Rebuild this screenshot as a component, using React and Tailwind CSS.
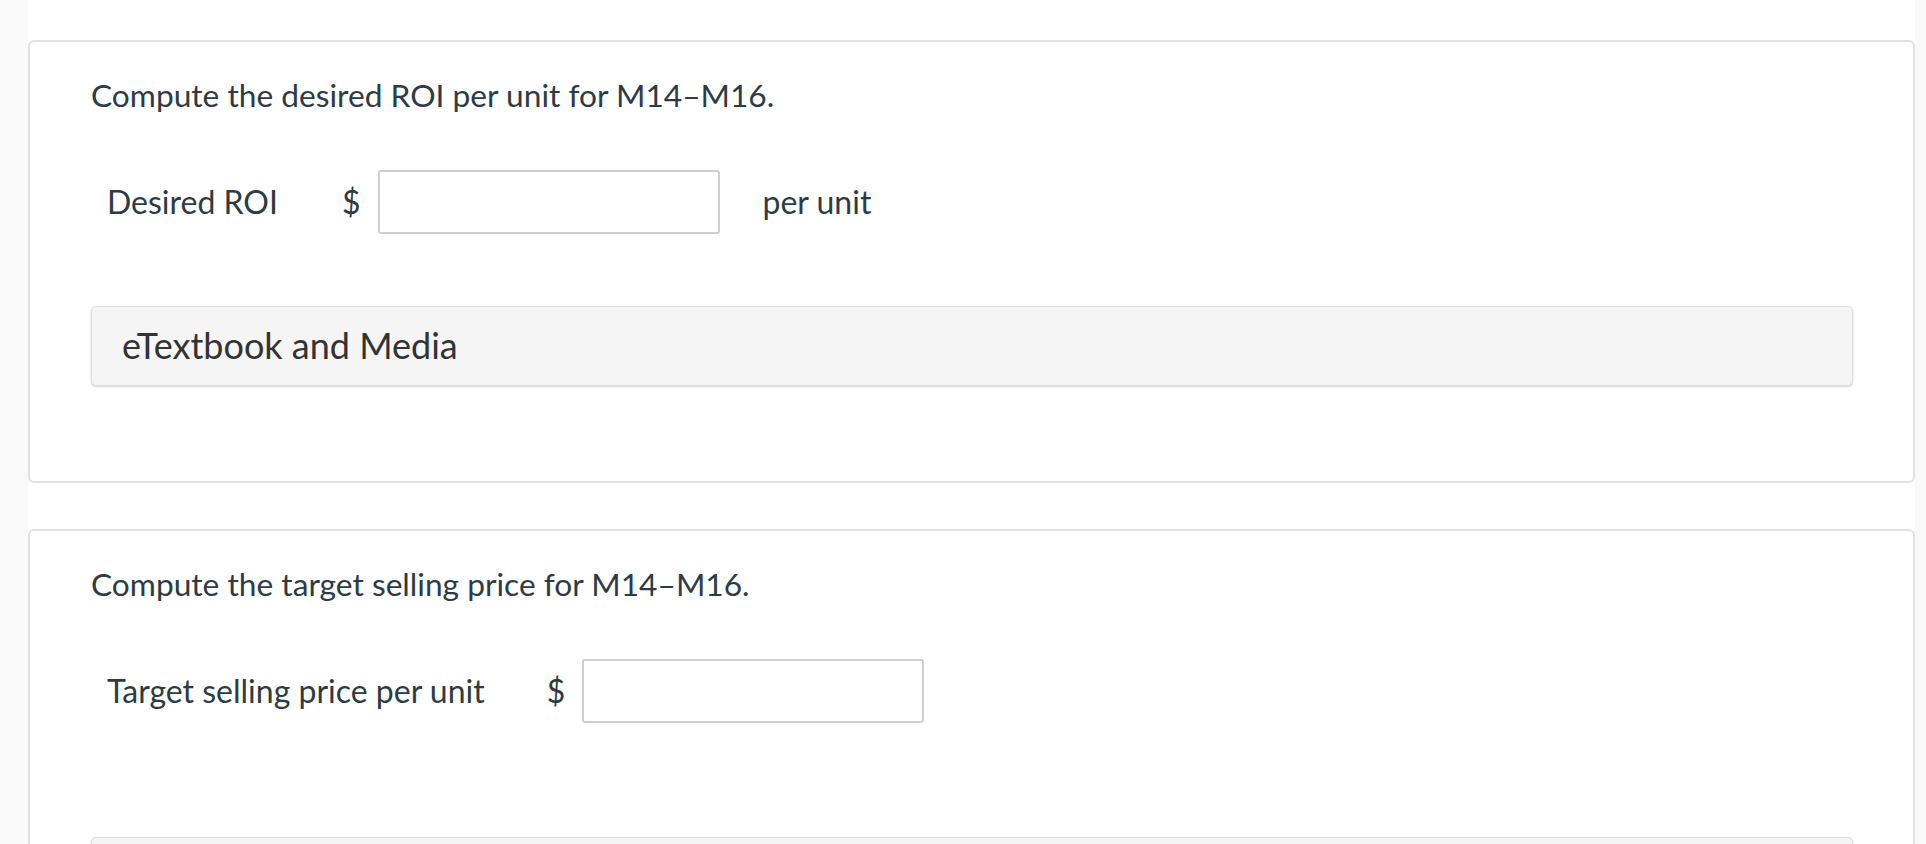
import React from 'react';

function AnswerRow({ label, gap, suffix }) {
    return (
        <div className="flex items-center pl-[16px]">
            <span className="text-[32px] leading-[1.2]">{label}</span>
            <span className={`text-[32px] leading-[1.2] ${gap}`}>$</span>
            <input type="text" className="ml-[17px] w-[342px] h-[64px] border-2 border-[#cfcfcf] rounded-[3px] bg-white outline-none" />
            {suffix && <span className="ml-[43px] text-[32px] leading-[1.2]">{suffix}</span>}
        </div>
    );
}

function MediaBox() {
    return (
        <div className="h-[80px] flex items-center pl-[30px] bg-[#f5f5f5] border border-[#dddddd] rounded-[5px] shadow-[0_1px_2px_rgba(0,0,0,0.15)]">
            <span className="text-[36px] leading-[1.2] text-[#333333]">eTextbook and Media</span>
        </div>
    );
}

export default function App() {
    return (
        <div className="flex min-h-[844px] bg-white font-['Lato',sans-serif] text-[#2d3b45]">
            <div className="w-[28px] shrink-0 bg-[#f9f9f9]" />
            <div className="flex-1 pt-[40px] flex flex-col gap-[46px]">
                <section className="bg-white border-2 border-[#e2e2e2] rounded-[6px] pl-[61px] pr-[60px] pt-[34px] pb-[95px]">
                    <p className="text-[31.7px] leading-[1.2]">Compute the desired ROI per unit for M14–M16.</p>
                    <div className="mt-[56px]">
                        <AnswerRow label="Desired ROI" gap="ml-[64px]" suffix="per unit" />
                    </div>
                    <div className="mt-[72px]">
                        <MediaBox />
                    </div>
                </section>
                <section className="bg-white border-2 border-[#e2e2e2] rounded-[6px] pl-[61px] pr-[60px] pt-[34px] pb-[93px]">
                    <p className="text-[31.7px] leading-[1.2]">Compute the target selling price for M14–M16.</p>
                    <div className="mt-[56px]">
                        <AnswerRow label="Target selling price per unit" gap="ml-[62px]" />
                    </div>
                    <div className="mt-[114px]">
                        <MediaBox />
                    </div>
                </section>
            </div>
            <div className="w-[11px] shrink-0 bg-[#f9f9f9]" />
        </div>
    );
}
